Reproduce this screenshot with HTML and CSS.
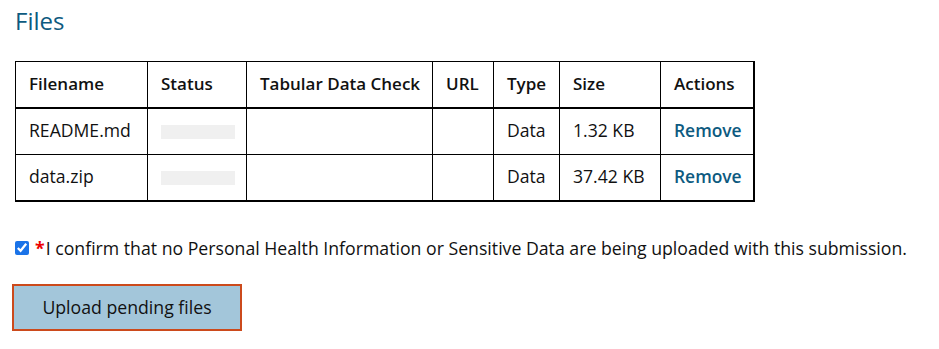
FILE: index.html
```html
<!DOCTYPE html>
<html>
<head>
<meta charset="utf-8">
<link rel="stylesheet" href="styles.css">
</head>
<body>
<div class="page">
  <h2 class="title">Files</h2>
  <table class="files">
    <colgroup>
      <col class="c-name">
      <col class="c-status">
      <col class="c-check">
      <col class="c-url">
      <col class="c-type">
      <col class="c-size">
      <col class="c-actions">
    </colgroup>
    <thead>
      <tr>
        <th>Filename</th>
        <th>Status</th>
        <th>Tabular Data Check</th>
        <th>URL</th>
        <th>Type</th>
        <th>Size</th>
        <th>Actions</th>
      </tr>
    </thead>
    <tbody>
      <tr>
        <td>README.md</td>
        <td><span class="placeholder"></span></td>
        <td></td>
        <td></td>
        <td>Data</td>
        <td>1.32 KB</td>
        <td><a class="remove" href="#">Remove</a></td>
      </tr>
      <tr>
        <td>data.zip</td>
        <td><span class="placeholder"></span></td>
        <td></td>
        <td></td>
        <td>Data</td>
        <td>37.42 KB</td>
        <td><a class="remove" href="#">Remove</a></td>
      </tr>
    </tbody>
  </table>
  <label class="confirm">
    <input type="checkbox" checked>
    <span class="req">*</span>I confirm that no Personal Health Information or Sensitive Data are being uploaded with this submission.
  </label>
  <button class="upload">Upload pending files</button>
</div>
</body>
</html>
```
FILE: styles.css
```css
html, body {
  margin: 0;
  padding: 0;
  background: #fff;
}
body {
  font-family: "Open Sans", "Noto Sans", sans-serif;
  color: #111;
}
.page {
  padding: 6px 15px 0 15px;
}
.title {
  margin: 0 0 25px 0;
  font-size: 24px;
  font-weight: 400;
  color: #0d5a80;
  line-height: 30px;
}
.files {
  border-collapse: collapse;
  table-layout: fixed;
  width: 739px;
  font-size: 17.6px;
  border: 2px solid #000;
  border-left-width: 1px;
  border-top-width: 1px;
}
.c-name { width: 132px; }
.c-status { width: 99px; }
.c-check { width: 186px; }
.c-url { width: 61px; }
.c-type { width: 66px; }
.c-size { width: 101px; }
.c-actions { width: 93px; }
.files th, .files td {
  border: 1px solid #000;
  padding: 0 0 3px 13px;
  height: 42px;
  text-align: left;
  white-space: nowrap;
}
.files th {
  font-size: 17px;
  font-weight: 600;
  border-bottom: 2px solid #000;
}
.placeholder {
  display: inline-block;
  width: 74px;
  height: 14px;
  background: #f0f0f0;
  vertical-align: middle;
}
.remove {
  color: #0d5a80;
  font-size: 17.4px;
  font-weight: 600;
  text-decoration: none;
}
.confirm {
  display: flex;
  align-items: center;
  margin-top: 34px;
  font-size: 17.7px;
  color: #111;
}
.confirm input {
  margin: 0 6px 0 0;
  width: 14px;
  height: 14px;
  accent-color: #1a73e8;
}
.req {
  color: #e00;
  font-weight: 700;
  margin-right: 1px;
}
.upload {
  display: block;
  margin: 24px 0 0 -3px;
  padding-bottom: 3px;
  width: 230px;
  height: 47px;
  background: #a3c6da;
  border: 2px solid #cc4a1c;
  font-family: inherit;
  font-size: 17.7px;
  color: #111;
}
```
